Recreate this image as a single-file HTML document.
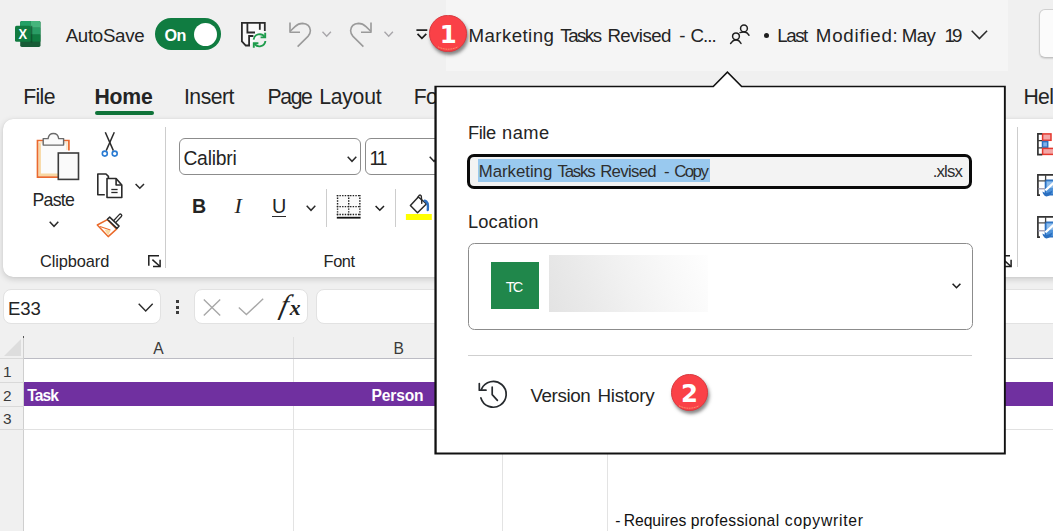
<!DOCTYPE html>
<html lang="en"><head><meta charset="utf-8"><title>Excel - Marketing Tasks Revised</title>
<style>
html,body{margin:0;padding:0}
body{width:1053px;height:531px;overflow:hidden;background:#f0f0f0;position:relative;font-family:"Liberation Sans",sans-serif;color:#242424}
.a{position:absolute}
.t{position:absolute;white-space:nowrap;line-height:1em}
svg{position:absolute;overflow:visible}
</style></head><body>
<div class="a" style="left:446.2px;top:0;width:561.6px;height:71.4px;background:#f5f5f5"></div>
<div class="a" style="left:1039.4px;top:9.2px;width:40px;height:48.6px;background:#fbfbfb;border:1.3px solid #d0d0d0;border-bottom-color:#c2c2c2;border-radius:6px;box-sizing:border-box;box-shadow:0 1px 1.5px rgba(0,0,0,.12)"></div>
<svg style="left:14.9px;top:21.2px" width="26" height="26" viewBox="0 0 26 26">
<rect x="5.2" y="0" width="20.3" height="25.9" rx="1.6" fill="#185c37"/>
<path d="M5.2 1.6Q5.2 0 6.8 0H15.7V6.8H5.2Z" fill="#23a065"/><path d="M15.7 0H23.9Q25.5 0 25.5 1.6V6.8H15.7Z" fill="#45b57c"/>
<rect x="5.2" y="6.8" width="10.5" height="6.8" fill="#128045"/><rect x="15.7" y="6.8" width="9.8" height="6.8" fill="#2a9d65"/>
<rect x="5.2" y="13.6" width="10.5" height="7" fill="#155f38"/><rect x="15.7" y="13.6" width="9.8" height="7" fill="#107c41"/>
<rect x="15.7" y="4.8" width="1.6" height="16.6" fill="#0c3b22" opacity=".55"/>
<rect x="0" y="4.8" width="15.7" height="15.9" rx="1.5" fill="#117b40"/>
<text x="7.9" y="17.9" font-size="14.2" font-weight="700" fill="#fff" text-anchor="middle" font-family="Liberation Sans, sans-serif" textLength="8.6" lengthAdjust="spacingAndGlyphs">X</text>
</svg>
<span class="t" style="left:65.65px;top:27.01px;font-size:18.7px;letter-spacing:-0.292px;">AutoSave</span>
<div class="a" style="left:154.5px;top:18px;width:66px;height:31.5px;border-radius:16px;background:#107c41"></div>
<div class="a" style="left:193.5px;top:22.5px;width:23px;height:23px;border-radius:50%;background:#fff"></div>
<span class="t" style="left:164.60px;top:27.01px;font-size:16.2px;font-weight:700;color:#fff;letter-spacing:-0.791px;">On</span>
<svg style="left:241px;top:22px" width="26" height="26" viewBox="0 0 26 26" fill="none" stroke="#2b2b2b" stroke-width="1.8">
<path d="M23.8 9V0.9H0.9V19.3L4.8 23.5H9" fill="#fafafa"/>
<path d="M6.4 0.9V10.5H14"/><path d="M18.8 0.9V7.8"/><path d="M8.1 23.5V14H12.4"/>
<g stroke="#1e9c4c" stroke-width="1.9"><path d="M12.6 17.6A6 6 0 0 1 23.6 15"/><path d="M24.2 10.8V15.4H19.6"/><path d="M24.4 19A6 6 0 0 1 13.4 21.6"/><path d="M12.8 25.8V21.2H17.4"/></g>
</svg>
<svg style="left:288.6px;top:22px" width="23" height="26" viewBox="0 0 23 26" fill="none" stroke="#9a9a9a" stroke-width="1.6" stroke-linejoin="round">
<path d="M1 0.4V10.2H11"/><path d="M1.2 9.3L6 4.6Q9.3 1.4 13.6 1.4Q20.8 1.8 21.4 8.6Q21.4 11.8 19 14.4L8.6 24.6"/>
</svg>
<svg style="left:321.8px;top:31.4px" width="10" height="7" viewBox="0 0 10 7" fill="none" stroke="#a8a6aa" stroke-width="1.4"><path d="M0.5 0.8L4.7 5.2L8.9 0.8"/></svg>
<svg style="left:348.9px;top:22px" width="23" height="26" viewBox="0 0 23 26" fill="none" stroke="#9a9a9a" stroke-width="1.6" stroke-linejoin="round">
<path d="M22 0.4V10.2H12"/><path d="M21.8 9.3L17 4.6Q13.7 1.4 9.4 1.4Q2.2 1.8 1.6 8.6Q1.6 11.8 4 14.4L14.4 24.6"/>
</svg>
<svg style="left:383.6px;top:31.4px" width="10" height="7" viewBox="0 0 10 7" fill="none" stroke="#a8a6aa" stroke-width="1.4"><path d="M0.5 0.8L4.7 5.2L8.9 0.8"/></svg>
<svg style="left:416px;top:29.4px" width="12" height="11" viewBox="0 0 12 11" fill="none" stroke="#1c1c1c" stroke-width="1.7"><path d="M0.4 1.1H11.3"/><path d="M1.5 4.9L5.9 9.3L10.3 4.9"/></svg>
<div class="a" style="left:429.4px;top:15.1px;width:37.4px;height:37.4px;border-radius:50%;box-sizing:border-box;background:#fa4147;border:1px solid #d9393f;box-shadow:1.5px 3px 3.5px rgba(40,40,40,.55);z-index:5"></div><svg style="left:437.1px;top:46.4px;z-index:5" width="22" height="5" viewBox="0 0 22 5" fill="none"><path d="M1 0.8Q11 5.6 21 0.8" stroke="#f9b07a" stroke-width="0.9" stroke-dasharray="1 0.7"/></svg>
<span class="t" style="left:439.80px;top:23.00px;font-size:24.4px;font-weight:700;color:#fff;font-family:'DejaVu Sans', 'Liberation Sans', sans-serif;z-index:6;">1</span>
<span class="t" style="left:468.50px;top:27.01px;font-size:18.7px;letter-spacing:0.418px;">Marketing</span>
<span class="t" style="left:560.30px;top:27.01px;font-size:18.7px;letter-spacing:-1.506px;">Tasks</span>
<span class="t" style="left:607.40px;top:27.01px;font-size:18.7px;letter-spacing:-0.587px;">Revised</span>
<span class="t" style="left:679.30px;top:27.01px;font-size:18.7px;">-</span>
<span class="t" style="left:690.60px;top:27.01px;font-size:18.7px;letter-spacing:-0.993px;">C...</span>
<svg style="left:728px;top:23px" width="24" height="22" viewBox="0 0 24 22" fill="none" stroke="#1f1f1f" stroke-width="1.5" stroke-linecap="round">
<circle cx="15.96" cy="5.4" r="3.4"/><path d="M12 9.6Q16 8.2 19.2 10L21 12.2"/>
<circle cx="7.98" cy="13.3" r="3.4"/><path d="M2.6 20.4L4.8 18Q8 16.2 11.2 18L13 20.4"/>
</svg>
<div class="a" style="left:764px;top:33px;width:5px;height:5px;border-radius:50%;background:#1f1f1f"></div>
<span class="t" style="left:777.30px;top:27.01px;font-size:18.7px;letter-spacing:-1.443px;">Last</span>
<span class="t" style="left:815.80px;top:27.01px;font-size:18.7px;letter-spacing:0.771px;">Modified:</span>
<span class="t" style="left:901.80px;top:27.01px;font-size:18.7px;letter-spacing:-0.630px;">May</span>
<span class="t" style="left:944.60px;top:27.01px;font-size:18.7px;letter-spacing:-2.893px;">19</span>
<svg style="left:971px;top:30px" width="17" height="10" viewBox="0 0 17 10" fill="none" stroke="#2b2b2b" stroke-width="1.5"><path d="M0.7 0.8L8.4 8.6L16.1 0.8"/></svg>
<span class="t" style="left:23.20px;top:86.01px;font-size:21.2px;letter-spacing:-0.619px;">File</span>
<span class="t" style="left:94.40px;top:86.01px;font-size:21.2px;font-weight:700;letter-spacing:-0.161px;">Home</span>
<div class="a" style="left:94.9px;top:111.1px;width:59px;height:3.8px;border-radius:2px;background:#0f7339"></div>
<span class="t" style="left:184.00px;top:86.01px;font-size:21.2px;letter-spacing:-0.521px;">Insert</span>
<span class="t" style="left:267.50px;top:86.01px;font-size:21.2px;letter-spacing:-1.366px;">Page</span>
<span class="t" style="left:319.20px;top:86.01px;font-size:21.2px;letter-spacing:-0.246px;">Layout</span>
<span class="t" style="left:413.70px;top:86.01px;font-size:21.2px;letter-spacing:-0.672px;">Formulas</span>
<span class="t" style="left:1023.40px;top:86.01px;font-size:21.2px;letter-spacing:-0.597px;">Help</span>
<div class="a" style="left:2.5px;top:118.8px;width:1070px;height:158px;background:#fff;border-radius:10px;box-shadow:0 2px 6px rgba(0,0,0,.17), 0 0 1px rgba(0,0,0,.12)"></div>
<svg style="left:36.3px;top:133px" width="47" height="48" viewBox="0 0 47 48" fill="none">
<rect x="2.4" y="8.4" width="29.6" height="34.6" fill="#fbfbfb"/>
<path d="M3.7 9.6V41.7H22" stroke="#f8d7a2" stroke-width="2.4"/><path d="M30.9 17V9.6H4" stroke="#fbe6c8" stroke-width="1.6"/>
<path d="M32.9 17.4V7.5H1.5V44.1H22" stroke="#ea6a2e" stroke-width="1.7"/>
<path d="M7.2 5.6H12.1Q12.8 0.5 17.4 0.5Q22 0.5 22.7 5.6H27.6V12.1H7.2Z" fill="#fafafa" stroke="#6a6a6a" stroke-width="1.4" stroke-linejoin="round"/>
<rect x="22.3" y="20" width="20.2" height="26.4" fill="#fafafa" stroke="#3b3b3b" stroke-width="1.6"/>
</svg>
<span class="t" style="left:32.50px;top:192.00px;font-size:17.7px;letter-spacing:-0.723px;">Paste</span>
<svg style="left:49px;top:221px" width="10" height="7" viewBox="0 0 10 7" fill="none" stroke="#2b2b2b" stroke-width="1.5"><path d="M0.7 0.8L5 5.3L9.3 0.8"/></svg>
<svg style="left:100px;top:130px" width="20" height="28" viewBox="0 0 20 28" fill="none" stroke-width="1.5">
<path d="M5.3 2.2L13.4 20.6" stroke="#2b2b2b"/><path d="M14.3 2.2L6.2 20.6" stroke="#2b2b2b"/>
<circle cx="4.8" cy="23.6" r="2.5" stroke="#2b7cd3" stroke-width="1.6"/><circle cx="14.7" cy="23.6" r="2.5" stroke="#2b7cd3" stroke-width="1.6"/>
</svg>
<svg style="left:97px;top:172.5px" width="27" height="27" viewBox="0 0 27 27" fill="none" stroke="#2b2b2b" stroke-width="1.6" stroke-linejoin="round">
<path d="M7.8 21.8H0.8V1H9L11.4 3.4V5.4"/>
<path d="M10 5.5H19.1L24.8 12V24.5H10Z" fill="#fff"/><path d="M19.1 5.7V12H24.6"/>
<path d="M14.3 16.5H20.6" stroke-width="1.3"/><path d="M14.3 19.5H20.6" stroke-width="1.3"/>
</svg>
<svg style="left:135px;top:183px" width="10" height="7" viewBox="0 0 10 7" fill="none" stroke="#2b2b2b" stroke-width="1.5"><path d="M0.6 0.9L4.8 5.2L9 0.9"/></svg>
<svg style="left:92px;top:205px" width="34" height="34" viewBox="0 0 34 34" fill="none" stroke-linejoin="round">
<path d="M15.4 14.7L5.3 20L16.2 31.6L24.5 24.1Z" fill="#fff" stroke="#ea6a2a" stroke-width="1.5"/>
<path d="M12.4 24.6L18.6 25.6L16.2 30.6Z" fill="#fbd9a0" stroke="none"/>
<path d="M8 21.4L18.4 25" stroke="#ea6a2a" stroke-width="1.1"/>
<path d="M22.6 16.6L28.3 10.6" stroke="#2b2b2b" stroke-width="4.2" stroke-linecap="round"/>
<path d="M23 16.2L28.3 10.6" stroke="#fff" stroke-width="1.5" stroke-linecap="round"/>
<path d="M17.7 12.1L15.4 14.3L24.9 23.4L27.1 21.1Z" fill="#fff" stroke="#2b2b2b" stroke-width="1.5"/>
</svg>
<span class="t" style="left:39.90px;top:253.01px;font-size:16.4px;letter-spacing:-0.093px;">Clipboard</span>
<svg style="left:147.5px;top:255px" width="13" height="13" viewBox="0 0 13 13" fill="none" stroke="#1f1f1f" stroke-width="1.5"><path d="M0.8 10.7V0.8H11"/><path d="M4.4 4.6L11.8 11.2"/><path d="M12.1 4.7V11.5H5"/></svg>
<div class="a" style="left:165px;top:127px;width:1.2px;height:140.5px;background:#cdcdcd"></div>
<div class="a" style="left:179px;top:138.4px;width:181.5px;height:37px;box-sizing:border-box;border:1.2px solid #8c8c8c;border-radius:6px;background:#fff"></div>
<span class="t" style="left:183.40px;top:149.02px;font-size:19.3px;letter-spacing:-0.193px;">Calibri</span>
<svg style="left:347px;top:155.5px" width="10" height="7" viewBox="0 0 10 7" fill="none" stroke="#2b2b2b" stroke-width="1.5"><path d="M0.7 0.8L5 5.3L9.3 0.8"/></svg>
<div class="a" style="left:364.8px;top:138.4px;width:90px;height:37px;box-sizing:border-box;border:1.2px solid #8c8c8c;border-radius:6px;background:#fff"></div>
<span class="t" style="left:369.40px;top:149.02px;font-size:19.3px;letter-spacing:-1.892px;">11</span>
<svg style="left:429px;top:155.5px" width="10" height="7" viewBox="0 0 10 7" fill="none" stroke="#2b2b2b" stroke-width="1.5"><path d="M0.7 0.8L5 5.3L9.3 0.8"/></svg>
<span class="t" style="left:191.90px;top:197.02px;font-size:19.6px;font-weight:700;">B</span>
<span class="t" style="left:234.60px;top:195.01px;font-size:22px;font-family:'Liberation Serif', serif;font-style:italic;">I</span>
<span class="t" style="left:272.00px;top:197.00px;font-size:19.8px;">U</span>
<div class="a" style="left:272px;top:215.5px;width:14.3px;height:1.6px;background:#2b2b2b"></div>
<svg style="left:305.5px;top:205px" width="10" height="7" viewBox="0 0 10 7" fill="none" stroke="#2b2b2b" stroke-width="1.5"><path d="M0.7 0.8L5 5.3L9.3 0.8"/></svg>
<div class="a" style="left:325.8px;top:188.5px;width:1.3px;height:38px;background:#cdcdcd"></div>
<svg style="left:336px;top:194px" width="26" height="26" viewBox="0 0 26 26" fill="none" stroke="#1f1f1f">
<rect x="0.8" y="0.9" width="23.8" height="20.4" fill="#fafafa" stroke="none"/>
<path d="M0.8 1.65H24.7M0.8 20.55H24.7M0.8 12.6H24.7" stroke-width="1.4" stroke-dasharray="1.4 1.25"/>
<path d="M1.55 0.9V21.3M23.85 0.9V21.3M12.7 0.9V21.3" stroke-width="1.4" stroke-dasharray="1.4 1.31"/>
<path d="M0.8 23.7H24.6" stroke-width="1.8" stroke="#111"/>
</svg>
<svg style="left:374.6px;top:205px" width="10" height="7" viewBox="0 0 10 7" fill="none" stroke="#1f1f1f" stroke-width="1.5"><path d="M0.6 0.9L4.8 5.2L9 0.9"/></svg>
<div class="a" style="left:395.2px;top:188.5px;width:1.3px;height:38px;background:#cdcdcd"></div>
<svg style="left:405px;top:194px" width="28" height="27" viewBox="0 0 28 27" fill="none" stroke-linejoin="round">
<path d="M5.4 11.4L13.3 3L21.6 9.8L12.5 18.7Z" stroke="#2b2b2b" stroke-width="1.5" fill="#fff"/>
<path d="M12.6 3.6L14.2 1.4Q15.5 0.5 16.3 2L16.8 9.4" stroke="#2b2b2b" stroke-width="1.4" stroke-linecap="round"/>
<path d="M19.8 6.8Q23.6 7.4 22.8 16" stroke="#2b6fc0" stroke-width="2.4" stroke-linecap="round"/>
<rect x="0.9" y="20" width="25.9" height="6" fill="#ffff00"/>
</svg>
<span class="t" style="left:323.50px;top:253.01px;font-size:16.4px;letter-spacing:-0.381px;">Font</span>
<div class="a" style="left:1017px;top:127px;width:1.2px;height:140px;background:#cdcdcd"></div>
<svg style="left:999px;top:255px" width="13" height="13" viewBox="0 0 13 13" fill="none" stroke="#1f1f1f" stroke-width="1.5"><path d="M0.8 10.7V0.8H11"/><path d="M4.4 4.6L11.8 11.2"/><path d="M12.1 4.7V11.5H5"/></svg>
<svg style="left:1037.1px;top:133.1px" width="24" height="23" viewBox="0 0 24 23" fill="none">
<rect x="0.8" y="0.8" width="23" height="20.8" fill="#fff"/>
<rect x="5.6" y="0.9" width="8.4" height="6.4" fill="#f3a6a6" stroke="#e5392f" stroke-width="1.5"/>
<rect x="5.5" y="8.6" width="5.2" height="5.6" fill="#7fb0ea" stroke="#2b6fc0" stroke-width="1.5"/>
<rect x="5.6" y="15.4" width="19" height="6" fill="#f3a6a6" stroke="#e5392f" stroke-width="1.5"/>
<path d="M0.9 22.4V0.9H5.2M0.9 21.6H5.2" stroke="#333" stroke-width="1.7"/>
<path d="M0.9 7.6H5M0.9 14.9H5" stroke="#3a3a3a" stroke-width="1.3"/>
</svg>
<svg style="left:1037.1px;top:174.4px" width="24" height="24" viewBox="0 0 24 24" fill="none">
<rect x="0.8" y="0.8" width="23" height="20.6" fill="#fff"/>
<rect x="8.4" y="6.2" width="16" height="14.6" fill="#4f93da" stroke="#2b6fc0" stroke-width="1.4"/>
<rect x="9.8" y="7.6" width="14" height="6.2" fill="#8fbdec"/>
<path d="M17 8.6L8.4 16.4" stroke="#fff" stroke-width="2.2"/>
<path d="M5.4 17.6Q9.4 21 15.4 16.6Q14.6 21.6 9.6 22.6Q6.2 21.8 5.4 17.6Z" fill="#2b6fc0"/>
<path d="M0.9 22V0.9H24M0.9 21.2H3" stroke="#333" stroke-width="1.7"/>
<path d="M8.6 0.9V6.4" stroke="#444" stroke-width="1.3"/><path d="M0.9 6.9H8.4" stroke="#444" stroke-width="1.2"/><path d="M0.9 14.8H7.8" stroke="#8a86a0" stroke-width="1.1"/>
</svg>
<svg style="left:1037.1px;top:215.6px" width="24" height="24" viewBox="0 0 24 24" fill="none">
<rect x="0.8" y="0.8" width="23" height="20.6" fill="#fff"/>
<rect x="8.4" y="6.2" width="16" height="14.6" fill="#4f93da" stroke="#2b6fc0" stroke-width="1.4"/>
<rect x="9.8" y="7.6" width="14" height="6.2" fill="#8fbdec"/>
<path d="M17 8.6L8.4 16.4" stroke="#fff" stroke-width="2.2"/>
<path d="M5.4 17.6Q9.4 21 15.4 16.6Q14.6 21.6 9.6 22.6Q6.2 21.8 5.4 17.6Z" fill="#2b6fc0"/>
<path d="M0.9 22V0.9H24M0.9 21.2H3" stroke="#333" stroke-width="1.7"/>
<path d="M8.6 0.9V6.4" stroke="#444" stroke-width="1.3"/><path d="M0.9 6.9H8.4" stroke="#444" stroke-width="1.2"/><path d="M0.9 14.8H7.8" stroke="#8a86a0" stroke-width="1.1"/>
</svg>
<div class="a" style="left:2.5px;top:289.4px;width:158.8px;height:34.5px;box-sizing:border-box;background:#fff;border:1px solid #e2e2e2;border-radius:8px"></div>
<span class="t" style="left:8.10px;top:300.01px;font-size:18.6px;letter-spacing:-0.221px;">E33</span>
<svg style="left:137.5px;top:302.5px" width="16" height="10" viewBox="0 0 16 10" fill="none" stroke="#2b2b2b" stroke-width="1.4"><path d="M0.7 0.8L7.7 8L14.7 0.8"/></svg>
<div class="a" style="left:176.2px;top:300.3px;width:3px;height:3px;background:#3b3b3b"></div>
<div class="a" style="left:176.2px;top:305.8px;width:3px;height:3px;background:#3b3b3b"></div>
<div class="a" style="left:176.2px;top:311.3px;width:3px;height:3px;background:#3b3b3b"></div>
<div class="a" style="left:193.5px;top:289.4px;width:114.6px;height:34.5px;box-sizing:border-box;background:#fff;border:1px solid #e2e2e2;border-radius:8px"></div>
<svg style="left:202.5px;top:299px" width="18" height="17" viewBox="0 0 18 17" fill="none" stroke="#a8a8a8" stroke-width="1.4"><path d="M0.8 0.6L17.2 16.4M17.2 0.6L0.8 16.4"/></svg>
<svg style="left:238px;top:298px" width="26" height="18" viewBox="0 0 26 18" fill="none" stroke="#a8a8a8" stroke-width="1.4"><path d="M0.8 9.6L8.4 16.6L25.2 0.8"/></svg>
<span class="t" style="left:279.40px;top:291.01px;font-size:28px;color:#222;font-family:'Liberation Serif', serif;font-style:italic;transform:skewX(-13deg);transform-origin:50% 75%;">f</span>
<span class="t" style="left:289.80px;top:298.01px;font-size:21.6px;font-weight:700;color:#222;font-family:'Liberation Serif', serif;font-style:italic;">x</span>
<div class="a" style="left:315.8px;top:289.4px;width:800px;height:34.5px;box-sizing:border-box;background:#fff;border:1px solid #e2e2e2;border-radius:8px"></div>
<div class="a" style="left:23.5px;top:358.5px;width:1040px;height:180px;background:#fff"></div>
<div class="a" style="left:0;top:357.8px;width:23px;height:1px;background:#d9d9d9"></div><div class="a" style="left:23px;top:357.8px;width:1030px;height:1px;background:#bcbcc4"></div>
<div class="a" style="left:22.7px;top:337px;width:1px;height:200px;background:#cfcfcf"></div>
<svg style="left:4px;top:339px" width="17" height="17" viewBox="0 0 17 17"><path d="M17 0V17H0Z" fill="#dddddd"/></svg>
<div class="a" style="left:23px;top:336px;width:1px;height:1.5px;background:#555"></div>
<div class="a" style="left:293.3px;top:337px;width:1px;height:21px;background:#e0e0e0"></div>
<div class="a" style="left:293.3px;top:358.5px;width:1px;height:180px;background:#e3e3e3"></div>
<div class="a" style="left:502px;top:337px;width:1px;height:21px;background:#e0e0e0"></div>
<div class="a" style="left:502px;top:358.5px;width:1px;height:180px;background:#e3e3e3"></div>
<div class="a" style="left:607.2px;top:337px;width:1px;height:21px;background:#e0e0e0"></div>
<div class="a" style="left:607.2px;top:358.5px;width:1px;height:180px;background:#e3e3e3"></div>
<span class="t" style="left:153.20px;top:341.01px;font-size:15.6px;color:#3a3a3a;">A</span>
<span class="t" style="left:393.60px;top:341.01px;font-size:15.6px;color:#3a3a3a;">B</span>
<div class="a" style="left:23.5px;top:382px;width:1040px;height:24.3px;background:#7030a0"></div>
<div class="a" style="left:0;top:381.5px;width:23.5px;height:1px;background:#d9d9d9"></div>
<div class="a" style="left:0;top:405.8px;width:23.5px;height:1px;background:#d9d9d9"></div>
<div class="a" style="left:0;top:429.3px;width:23.5px;height:1px;background:#d9d9d9"></div>
<div class="a" style="left:23.5px;top:429.3px;width:1040px;height:1px;background:#e1e1e1"></div>
<span class="t" style="left:3.00px;top:364.01px;font-size:15.4px;color:#3a3a3a;">1</span>
<span class="t" style="left:2.90px;top:388.01px;font-size:15.4px;color:#3a3a3a;">2</span>
<span class="t" style="left:2.90px;top:411.01px;font-size:15.4px;color:#3a3a3a;">3</span>
<span class="t" style="left:27.30px;top:388.00px;font-size:15.6px;font-weight:700;color:#fff;letter-spacing:-0.904px;">Task</span>
<span class="t" style="left:371.60px;top:388.00px;font-size:15.6px;font-weight:700;color:#fff;letter-spacing:-0.188px;">Person</span>
<span class="t" style="left:615.20px;top:513.01px;font-size:15.7px;color:#111;">-</span>
<span class="t" style="left:623.70px;top:513.01px;font-size:15.7px;color:#111;letter-spacing:-0.034px;">Requires</span>
<span class="t" style="left:690.70px;top:513.01px;font-size:15.7px;color:#111;letter-spacing:0.354px;">professional</span>
<span class="t" style="left:784.80px;top:513.01px;font-size:15.7px;color:#111;letter-spacing:0.738px;">copywriter</span>
<svg style="left:0;top:0;z-index:3" width="1053" height="531" viewBox="0 0 1053 531" fill="none">
<path d="M434.4 85.7H712.9L727.4 70.9L742 85.7H1005.8V454.5H434.4Z" fill="#111"/><path d="M436.7 87.3H713.6L727.4 73.2L741.3 87.3H1003.9V452.5H436.7Z" fill="#fff"/>
</svg>
<span class="t" style="left:467.90px;top:124.00px;font-size:18.3px;letter-spacing:-0.397px;z-index:4;">File</span>
<span class="t" style="left:502.00px;top:124.00px;font-size:18.3px;letter-spacing:0.479px;z-index:4;">name</span>
<div class="a" style="left:467.4px;top:153.8px;width:505px;height:35px;box-sizing:border-box;border:3px solid #0a0a0a;border-radius:7px;background:#f3f3f3;z-index:4"></div>
<div class="a" style="left:478px;top:158.6px;width:232px;height:23.5px;background:#99c9ef;z-index:4"></div>
<span class="t" style="left:478.80px;top:164.00px;font-size:16.8px;color:#2e2e2e;letter-spacing:-0.031px;z-index:5;">Marketing</span>
<span class="t" style="left:557.50px;top:164.00px;font-size:16.8px;color:#2e2e2e;letter-spacing:-1.176px;z-index:5;">Tasks</span>
<span class="t" style="left:600.20px;top:164.00px;font-size:16.8px;color:#2e2e2e;letter-spacing:-0.699px;z-index:5;">Revised</span>
<span class="t" style="left:663.90px;top:164.00px;font-size:16.8px;color:#2e2e2e;z-index:5;">-</span>
<span class="t" style="left:674.30px;top:164.00px;font-size:16.8px;color:#2e2e2e;letter-spacing:-1.562px;z-index:5;">Copy</span>
<span class="t" style="left:932.70px;top:164.00px;font-size:16.8px;color:#2e2e2e;letter-spacing:-0.843px;z-index:5;">.xlsx</span>
<span class="t" style="left:467.90px;top:213.01px;font-size:18.3px;letter-spacing:0.193px;z-index:4;">Location</span>
<div class="a" style="left:468px;top:243px;width:504.5px;height:86.5px;box-sizing:border-box;border:1.4px solid #8c8c8c;border-radius:6.5px;background:#fff;z-index:4"></div>
<div class="a" style="left:491.3px;top:262px;width:47.6px;height:47px;background:#20874b;z-index:4"></div>
<span class="t" style="left:505.80px;top:280.01px;font-size:14.6px;color:#fff;letter-spacing:-1.914px;z-index:5;">TC</span>
<div class="a" style="left:549px;top:254.8px;width:159px;height:57.4px;background:linear-gradient(68deg,#e3e3e3 0%,#e9e9e9 22%,#f1f1f1 48%,#f8f8f8 74%,#fefefe 100%);z-index:4"></div>
<svg style="left:951.5px;top:283.3px;z-index:4" width="10" height="7" viewBox="0 0 10 7" fill="none" stroke="#1f1f1f" stroke-width="1.6"><path d="M0.6 0.7L4.5 4.7L8.4 0.7"/></svg>
<div class="a" style="left:468px;top:355.3px;width:504px;height:1.2px;background:#cfcfcf;z-index:4"></div>
<svg style="left:478px;top:380px;z-index:4" width="30" height="30" viewBox="0 0 30 30" fill="none" stroke="#262a2e" stroke-width="1.7" stroke-linecap="round" stroke-linejoin="round">
<path d="M3.5 9.05A12.9 12.9 0 1 1 2.9 17.9"/><path d="M1.3 3.5V10.2H8"/><path d="M14.2 7.2V14.7L19.4 20.3"/>
</svg>
<span class="t" style="left:530.50px;top:387.01px;font-size:18.8px;letter-spacing:-0.416px;z-index:4;">Version</span>
<span class="t" style="left:597.40px;top:387.01px;font-size:18.8px;letter-spacing:-0.207px;z-index:4;">History</span>
<div class="a" style="left:670.5px;top:373.9px;width:37.4px;height:37.4px;border-radius:50%;box-sizing:border-box;background:#fa4147;border:1px solid #d9393f;box-shadow:1.5px 3px 3.5px rgba(40,40,40,.55);z-index:5"></div><svg style="left:678.2px;top:405.2px;z-index:5" width="22" height="5" viewBox="0 0 22 5" fill="none"><path d="M1 0.8Q11 5.6 21 0.8" stroke="#f9b07a" stroke-width="0.9" stroke-dasharray="1 0.7"/></svg>
<span class="t" style="left:680.90px;top:382.01px;font-size:24.4px;font-weight:700;color:#fff;font-family:'DejaVu Sans', 'Liberation Sans', sans-serif;z-index:6;">2</span>
</body></html>
